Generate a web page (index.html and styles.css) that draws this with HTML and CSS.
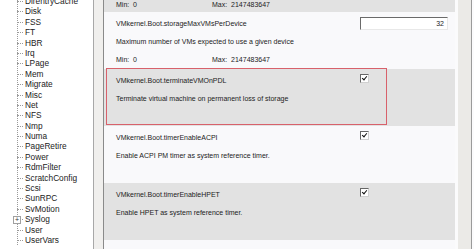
FILE: index.html
```html
<!DOCTYPE html>
<html>
<head>
<meta charset="utf-8">
<link rel="stylesheet" href="styles.css">
</head>
<body>
<div class="app">
  <div class="tree">
    <ul class="items">
      <li class="cut">DirentryCache</li>
      <li>Disk</li>
      <li>FSS</li>
      <li>FT</li>
      <li>HBR</li>
      <li>Irq</li>
      <li>LPage</li>
      <li>Mem</li>
      <li>Migrate</li>
      <li>Misc</li>
      <li>Net</li>
      <li>NFS</li>
      <li>Nmp</li>
      <li>Numa</li>
      <li>PageRetire</li>
      <li>Power</li>
      <li>RdmFilter</li>
      <li>ScratchConfig</li>
      <li>Scsi</li>
      <li>SunRPC</li>
      <li>SvMotion</li>
      <li class="exp"><span class="plus">+</span>Syslog</li>
      <li>User</li>
      <li>UserVars</li>
    </ul>
  </div>
  <div class="splitter"></div>
  <div class="panel">
    <div class="rows">
      <div class="row gray top">
        <div class="minmax"><span class="min">Min:&nbsp;&nbsp;0</span><span>Max:&nbsp;&nbsp;2147483647</span></div>
      </div>
      <div class="row light">
        <div class="head"><span class="name">VMkernel.Boot.storageMaxVMsPerDevice</span><span class="input">32</span></div>
        <div class="desc">Maximum number of VMs expected to use a given device</div>
        <div class="minmax"><span class="min">Min:&nbsp;&nbsp;0</span><span>Max:&nbsp;&nbsp;2147483647</span></div>
      </div>
      <div class="row gray">
        <div class="head"><span class="name">VMkernel.Boot.terminateVMOnPDL</span><span class="check"></span></div>
        <div class="desc">Terminate virtual machine on permanent loss of storage</div>
        <div class="highlight"></div>
      </div>
      <div class="row light">
        <div class="head"><span class="name">VMkernel.Boot.timerEnableACPI</span><span class="check"></span></div>
        <div class="desc">Enable ACPI PM timer as system reference timer.</div>
      </div>
      <div class="row gray">
        <div class="head"><span class="name">VMkernel.Boot.timerEnableHPET</span><span class="check"></span></div>
        <div class="desc">Enable HPET as system reference timer.</div>
      </div>
      <div class="row light"></div>
    </div>
    <div class="scroll"><div class="track"></div></div>
  </div>
</div>
</body>
</html>
```

FILE: styles.css
```css
* { box-sizing: border-box; }
html, body { margin: 0; padding: 0; }
body {
  width: 474px;
  height: 249px;
  overflow: hidden;
  background: #ffffff;
  font-family: "Liberation Sans", Arial, sans-serif;
  color: #1c1c1c;
}
.app {
  display: flex;
  height: 249px;
  overflow: hidden;
}
.tree {
  width: 94px;
  flex: none;
  background: #ffffff;
  border-right: 1px solid #a8a8a8;
  position: relative;
  overflow: hidden;
}
.items {
  list-style: none;
  margin: 0;
  padding: 0 0 0 17px;
  margin-top: -4px;
  background-image: linear-gradient(#9a9a9a 50%, transparent 50%);
  background-size: 1px 2px;
  background-repeat: repeat-y;
  background-position: 17px 0;
}
.items li {
  height: 10.4px;
  line-height: 10.4px;
  font-size: 8.3px;
  padding-left: 8px;
  position: relative;
  white-space: nowrap;
  color: #222;
}
.items li::before {
  content: "";
  position: absolute;
  left: 0;
  top: 5px;
  width: 6px;
  border-top: 1px dotted #9a9a9a;
}
.plus {
  position: absolute;
  left: -4px;
  top: 1.5px;
  width: 8px;
  height: 8px;
  border: 1px solid #a0a0a0;
  background: #fff;
  font-size: 7px;
  line-height: 6px;
  text-align: center;
  color: #333;
  z-index: 1;
}
.splitter {
  width: 10px;
  flex: none;
  background: #f0efed;
  border-right: 1px solid #8a8a8a;
}
.panel {
  flex: 1;
  display: flex;
  background: #fbfbfc;
}
.rows {
  width: 351px;
  flex: none;
}
.row {
  height: 57px;
  position: relative;
  padding: 0 0 0 12px;
  font-size: 7px;
  color: #1c1c1c;
}
.row.top { height: 12px; }
.row.light { background: #f9f9fb; }
.row.gray { background: #e2e2e2; }
.head {
  display: flex;
  align-items: center;
  height: 20px;
  padding-top: 2px;
}
.name { width: 244px; }
.desc {
  height: 19px;
  line-height: 19px;
}
.minmax {
  height: 16px;
  line-height: 17px;
  display: flex;
}
.row.top .minmax { height: 12px; line-height: 10px; }
.min { width: 96px; }
.input {
  width: 88px;
  height: 13px;
  background: #fff;
  border-top: 1px solid #6a6a6a;
  border-left: 1px solid #6a6a6a;
  border-right: 1px solid #e8e8e8;
  border-bottom: 1px solid #e8e8e8;
  text-align: right;
  padding-right: 3px;
  line-height: 11px;
  font-size: 7px;
}
.check {
  width: 9px;
  height: 9px;
  border-top: 1px solid #666;
  border-left: 1px solid #666;
  border-right: 1px solid #d0d0d0;
  border-bottom: 1px solid #d0d0d0;
  background: #fff;
  position: relative;
  margin-top: -3px;
}
.check::after {
  content: "";
  position: absolute;
  left: 2px;
  top: 0px;
  width: 2px;
  height: 4px;
  border-right: 1.5px solid #111;
  border-bottom: 1.5px solid #111;
  transform: rotate(40deg);
}
.highlight {
  position: absolute;
  left: 2px;
  top: -1px;
  width: 281px;
  height: 57px;
  border: 1.5px solid #d8616b;
  pointer-events: none;
}
.scroll {
  flex: 1;
  display: flex;
  background: #fbfbfc;
  padding-left: 3px;
}
.track {
  flex: 1;
  background: #ebeae7;
  border-right: 1px solid #9a9a9a;
  margin-right: 2px;
}
```
